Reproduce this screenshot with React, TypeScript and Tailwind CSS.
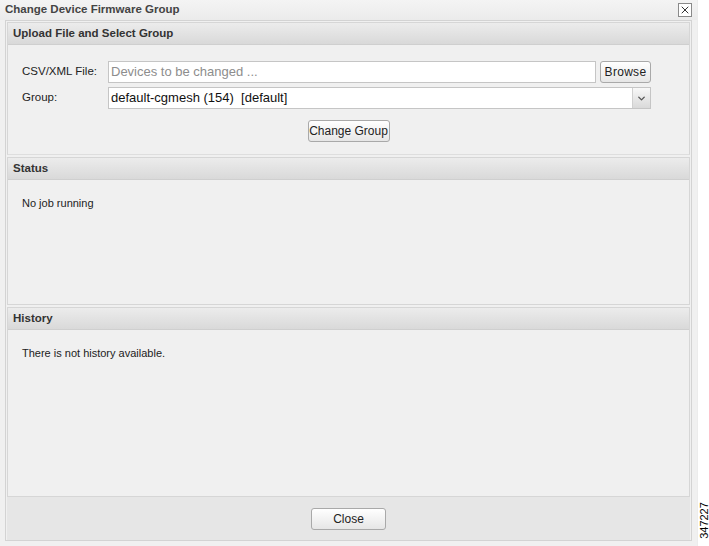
import { ChevronDown, X } from 'lucide-react';

function PanelHeader({ title }: { title: string }) {
  return (
    <div className="flex h-[22px] items-center border-b border-[#cfcfcf] bg-gradient-to-b from-[#ececec] to-[#d9d9d9] px-[5px] text-[11.5px] font-bold text-[#333]">
      {title}
    </div>
  );
}

function Btn({ label, className }: { label: string; className?: string }) {
  return (
    <button
      className={
        'flex h-[22px] items-center justify-center rounded-[3px] border border-[#a9a9a9] bg-gradient-to-b from-[#ffffff] to-[#e6e6e6] text-[11px] text-[#222] ' +
        (className ?? '')
      }
    >
      {label}
    </button>
  );
}

export default function App() {
  return (
    <div className="flex h-[546px] w-[709px] bg-white font-['Liberation_Sans',Arial,sans-serif]">
      <div className="flex w-[697px] shrink-0 flex-col bg-[#f0f0f0]">
        {/* title bar */}
        <div className="flex h-[20px] items-center justify-between bg-gradient-to-b from-[#f4f4f4] to-[#ebebeb] pl-[5px] pr-[5px]">
          <span className="text-[11.5px] font-bold text-[#444]">Change Device Firmware Group</span>
          <span className="flex h-[14px] w-[14px] items-center justify-center border border-[#8a8a8a] bg-white">
            <X className="h-[12px] w-[12px] text-[#333]" strokeWidth={2} />
          </span>
        </div>

        <div className="mx-[5px] mb-[5px] flex flex-1 flex-col border border-[#d3d3d3] px-[1px]">
          {/* upload */}
          <div className="mt-[1px] flex h-[133px] flex-col border border-[#d6d6d6] border-b-[#dedede]">
            <PanelHeader title="Upload File and Select Group" />
            <div className="flex flex-col gap-[4px] pl-[14px] pr-[38px] pt-[16px] text-[11.5px] text-[#222]">
              <div className="flex items-center">
                <span className="w-[86px]">CSV/XML File:</span>
                <div className="flex h-[22px] flex-1 items-center border border-[#c5c5c5] bg-white px-[2px] text-[13px] text-[#8d8d8d]">
                  Devices to be changed ...
                </div>
                <Btn label="Browse" className="ml-[4px] w-[51px] text-[12px] tracking-[0.3px]" />
              </div>
              <div className="flex items-center">
                <span className="w-[86px]">Group:</span>
                <div className="flex h-[22px] flex-1 items-center border border-[#c5c5c5] bg-white pl-[2px] text-[13px] text-[#111]">
                  <span className="flex-1 whitespace-pre">default-cgmesh (154)  [default]</span>
                  <span className="flex h-full w-[18px] items-center justify-center border-l border-[#d0d0d0] bg-gradient-to-b from-[#f8f8f8] to-[#d9d9d9]">
                    <ChevronDown className="h-[11px] w-[11px] text-[#555]" strokeWidth={3} />
                  </span>
                </div>
              </div>
            </div>
            <div className="flex justify-center pt-[11px]">
              <Btn label="Change Group" className="w-[82px] text-[12px]" />
            </div>
          </div>

          {/* status */}
          <div className="mt-[2px] flex h-[148px] flex-col border border-[#d6d6d6]">
            <PanelHeader title="Status" />
            <div className="pl-[14px] pt-[15px] text-[11px] text-[#222]">No job running</div>
          </div>

          {/* history */}
          <div className="mt-[2px] flex flex-1 flex-col border border-[#d6d6d6]">
            <PanelHeader title="History" />
            <div className="pl-[14px] pt-[15px] text-[11px] text-[#222]">There is not history available.</div>
          </div>

          {/* footer */}
          <div className="flex h-[43px] items-center justify-center bg-[#e6e6e6]">
            <Btn label="Close" className="w-[75px] text-[12px]" />
          </div>
        </div>
      </div>
      <div className="relative w-[12px] shrink-0 border-l border-[#ececec]">
        <span className="absolute bottom-[20px] left-[-12px] -rotate-90 whitespace-nowrap text-[11px] leading-none text-black">347227</span>
      </div>
    </div>
  );
}
